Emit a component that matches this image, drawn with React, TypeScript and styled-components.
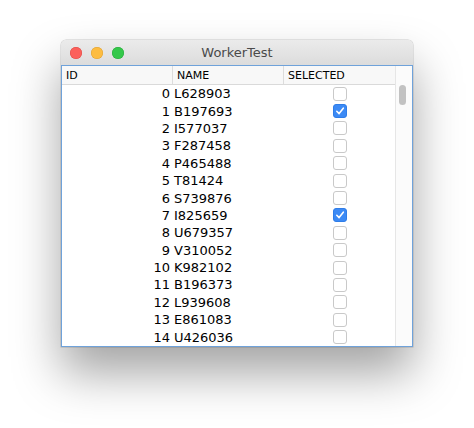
import React from "react";
import styled, { createGlobalStyle } from "styled-components";

const GlobalStyle = createGlobalStyle`
  html, body {
    margin: 0;
    padding: 0;
    background: #ffffff;
  }
  body {
    font-family: "DejaVu Sans", "Liberation Sans", sans-serif;
  }
`;

const Page = styled.div`
  width: 474px;
  height: 428px;
  padding: 40px 0 0 61px;
  box-sizing: border-box;
`;

const Window = styled.div`
  width: 352px;
  border-radius: 5px 5px 0 0;
  box-shadow: 0 26px 48px rgba(0, 0, 0, 0.36), 0 0 0 0.5px rgba(0, 0, 0, 0.18);
  background: #ececec;
`;

const TitleBar = styled.div`
  position: relative;
  height: 25px;
  display: flex;
  align-items: center;
  justify-content: center;
  background: linear-gradient(#ebebeb, #dcdcdc);
  border-radius: 5px 5px 0 0;
  font-size: 13px;
  color: #4a4a4a;
`;

const Lights = styled.div`
  position: absolute;
  left: 9px;
  top: 7px;
  display: flex;
  gap: 9px;
`;

const Light = styled.span<{ $color: string; $edge: string }>`
  width: 12px;
  height: 12px;
  border-radius: 50%;
  background: ${({ $color }) => $color};
  box-shadow: inset 0 0 0 0.5px ${({ $edge }) => $edge};
`;

const Content = styled.div`
  display: flex;
  height: 280px;
  border: 1px solid #6fa2da;
  background: #ffffff;
  overflow: hidden;
`;

const Table = styled.div`
  width: 333px;
  display: flex;
  flex-direction: column;
`;

const HeaderRow = styled.div`
  flex-shrink: 0;
  display: grid;
  grid-template-columns: 111px 111px 111px;
  height: 18px;
  background: #f8f8f8;
  border-bottom: 1px solid #dadada;
  font-size: 11px;
  color: #000;
`;

const HeaderCell = styled.div`
  display: flex;
  align-items: center;
  padding-left: 4px;
  border-right: 1px solid #dcdcdc;
  &:last-child {
    border-right: none;
  }
`;

const Row = styled.div`
  flex-shrink: 0;
  display: grid;
  grid-template-columns: 111px 111px 111px;
  height: 17.4px;
  align-items: center;
  font-size: 13px;
  color: #000;
  line-height: 17px;
`;

const IdCell = styled.div`
  text-align: right;
  padding-right: 3px;
`;

const NameCell = styled.div`
  padding-left: 1px;
`;

const CheckCell = styled.div`
  display: flex;
  justify-content: center;
  align-items: center;
`;

const Box = styled.span<{ $checked: boolean }>`
  width: 14px;
  height: 14px;
  box-sizing: border-box;
  border-radius: 3px;
  display: flex;
  align-items: center;
  justify-content: center;
  background: ${({ $checked }) => ($checked ? "#3c8af5" : "#ffffff")};
  border: 1px solid ${({ $checked }) => ($checked ? "#2f7de8" : "#c9c9c9")};
`;

const ScrollTrack = styled.div`
  width: 17px;
  border-left: 1px solid #e6e6e6;
  background: #fbfbfb;
  box-sizing: border-box;
  padding: 19px 0 0 3px;
`;

const Thumb = styled.div`
  width: 7px;
  height: 20px;
  border-radius: 4px;
  background: #c2c2c2;
`;

const rows: [number, string, boolean][] = [
  [0, "L628903", false],
  [1, "B197693", true],
  [2, "I577037", false],
  [3, "F287458", false],
  [4, "P465488", false],
  [5, "T81424", false],
  [6, "S739876", false],
  [7, "I825659", true],
  [8, "U679357", false],
  [9, "V310052", false],
  [10, "K982102", false],
  [11, "B196373", false],
  [12, "L939608", false],
  [13, "E861083", false],
  [14, "U426036", false],
];

const Check = () => (
  <svg width="10" height="10" viewBox="0 0 10 10">
    <path
      d="M1.8 5.3 L4.1 7.6 L8.3 2.2"
      fill="none"
      stroke="#fff"
      strokeWidth="1.6"
      strokeLinecap="round"
      strokeLinejoin="round"
    />
  </svg>
);

export default function App() {
  return (
    <Page>
      <GlobalStyle />
      <Window>
        <TitleBar>
          <Lights>
            <Light $color="#fc605b" $edge="#de4a45" />
            <Light $color="#fdbc40" $edge="#dea032" />
            <Light $color="#34c84a" $edge="#27a83a" />
          </Lights>
          WorkerTest
        </TitleBar>
        <Content>
          <Table>
            <HeaderRow>
              <HeaderCell>ID</HeaderCell>
              <HeaderCell>NAME</HeaderCell>
              <HeaderCell>SELECTED</HeaderCell>
            </HeaderRow>
            {rows.map(([id, name, sel]) => (
              <Row key={id}>
                <IdCell>{id}</IdCell>
                <NameCell>{name}</NameCell>
                <CheckCell>
                  <Box $checked={sel}>{sel && <Check />}</Box>
                </CheckCell>
              </Row>
            ))}
          </Table>
          <ScrollTrack>
            <Thumb />
          </ScrollTrack>
        </Content>
      </Window>
    </Page>
  );
}
